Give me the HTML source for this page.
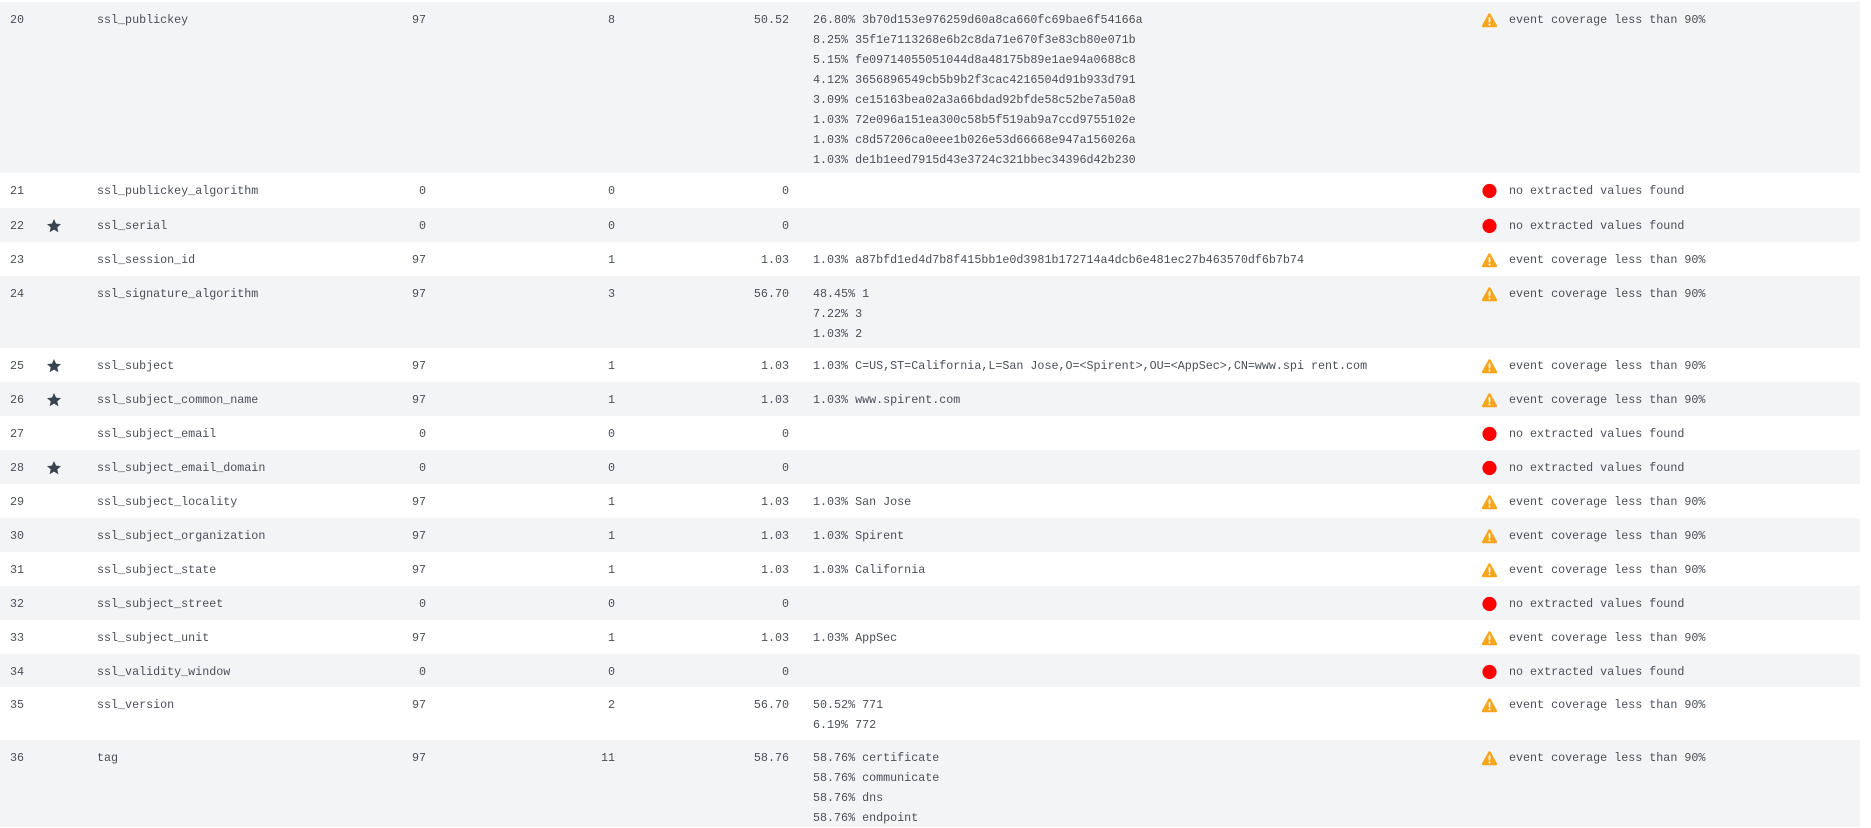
<!DOCTYPE html>
<html><head><meta charset="utf-8"><style>
body{margin:0;width:1871px;height:827px;background:#fff;overflow:hidden;font-family:"Liberation Mono",monospace;font-size:11.7px;color:#4a4f57;}
.r{position:absolute;left:0;width:1860px;}
.g{background:#f3f4f6;}
.c{position:absolute;top:8px;line-height:20px;white-space:pre;}
.n{left:10px}.nm{left:97px}.a{right:1434px;text-align:right}.b{right:1245px;text-align:right}.p{right:1071px;text-align:right}.v{left:813px}.st{left:1509px}
.star{position:absolute;left:46px;top:10px;width:16px;height:16px}
.ico{position:absolute;left:1481px;top:10px;width:17px;height:16px}
</style></head><body>
<svg width="0" height="0" style="position:absolute"><defs>
<symbol id="s" viewBox="0 0 24 24"><path d="M12 1.5l3.1 7 7.4.6-5.6 4.9 1.7 7.4L12 17.5l-6.6 3.9 1.7-7.4L1.5 9.1l7.4-.6z" fill="#3a4350"/></symbol>
<symbol id="w" viewBox="0 0 24 22"><path d="M12 1.5c.7 0 1.2.4 1.6 1l9 16.2c.6 1.2-.2 2.6-1.6 2.6H3c-1.4 0-2.2-1.4-1.6-2.6l9-16.2c.4-.6.9-1 1.6-1z" fill="#f9a51a"/><rect x="10.8" y="7" width="2.4" height="7.5" rx="1" fill="#fff"/><circle cx="12" cy="17.3" r="1.4" fill="#fff"/></symbol>
<symbol id="e" viewBox="0 0 24 22"><circle cx="12" cy="11" r="10" fill="#f00"/></symbol>
</defs></svg>

<div class="r g" style="top:2px;height:171px"><div class="c n">20</div><div class="c nm">ssl_publickey</div><div class="c a">97</div><div class="c b">8</div><div class="c p">50.52</div><div class="c v">26.80% 3b70d153e976259d60a8ca660fc69bae6f54166a
8.25% 35f1e7113268e6b2c8da71e670f3e83cb80e071b
5.15% fe09714055051044d8a48175b89e1ae94a0688c8
4.12% 3656896549cb5b9b2f3cac4216504d91b933d791
3.09% ce15163bea02a3a66bdad92bfde58c52be7a50a8
1.03% 72e096a151ea300c58b5f519ab9a7ccd9755102e
1.03% c8d57206ca0eee1b026e53d66668e947a156026a
1.03% de1b1eed7915d43e3724c321bbec34396d42b230</div><svg class="ico"><use href="#w"/></svg><div class="c st">event coverage less than 90%</div></div>

<div class="r" style="top:173px;height:35px"><div class="c n">21</div><div class="c nm">ssl_publickey_algorithm</div><div class="c a">0</div><div class="c b">0</div><div class="c p">0</div><svg class="ico"><use href="#e"/></svg><div class="c st">no extracted values found</div></div>

<div class="r g" style="top:208px;height:34px"><div class="c n">22</div><svg class="star"><use href="#s"/></svg><div class="c nm">ssl_serial</div><div class="c a">0</div><div class="c b">0</div><div class="c p">0</div><svg class="ico"><use href="#e"/></svg><div class="c st">no extracted values found</div></div>

<div class="r" style="top:242px;height:34px"><div class="c n">23</div><div class="c nm">ssl_session_id</div><div class="c a">97</div><div class="c b">1</div><div class="c p">1.03</div><div class="c v">1.03% a87bfd1ed4d7b8f415bb1e0d3981b172714a4dcb6e481ec27b463570df6b7b74</div><svg class="ico"><use href="#w"/></svg><div class="c st">event coverage less than 90%</div></div>

<div class="r g" style="top:276px;height:72px"><div class="c n">24</div><div class="c nm">ssl_signature_algorithm</div><div class="c a">97</div><div class="c b">3</div><div class="c p">56.70</div><div class="c v">48.45% 1
7.22% 3
1.03% 2</div><svg class="ico"><use href="#w"/></svg><div class="c st">event coverage less than 90%</div></div>

<div class="r" style="top:348px;height:34px"><div class="c n">25</div><svg class="star"><use href="#s"/></svg><div class="c nm">ssl_subject</div><div class="c a">97</div><div class="c b">1</div><div class="c p">1.03</div><div class="c v">1.03% C=US,ST=California,L=San Jose,O=&lt;Spirent&gt;,OU=&lt;AppSec&gt;,CN=www.spi rent.com</div><svg class="ico"><use href="#w"/></svg><div class="c st">event coverage less than 90%</div></div>

<div class="r g" style="top:382px;height:34px"><div class="c n">26</div><svg class="star"><use href="#s"/></svg><div class="c nm">ssl_subject_common_name</div><div class="c a">97</div><div class="c b">1</div><div class="c p">1.03</div><div class="c v">1.03% www.spirent.com</div><svg class="ico"><use href="#w"/></svg><div class="c st">event coverage less than 90%</div></div>

<div class="r" style="top:416px;height:34px"><div class="c n">27</div><div class="c nm">ssl_subject_email</div><div class="c a">0</div><div class="c b">0</div><div class="c p">0</div><svg class="ico"><use href="#e"/></svg><div class="c st">no extracted values found</div></div>

<div class="r g" style="top:450px;height:34px"><div class="c n">28</div><svg class="star"><use href="#s"/></svg><div class="c nm">ssl_subject_email_domain</div><div class="c a">0</div><div class="c b">0</div><div class="c p">0</div><svg class="ico"><use href="#e"/></svg><div class="c st">no extracted values found</div></div>

<div class="r" style="top:484px;height:34px"><div class="c n">29</div><div class="c nm">ssl_subject_locality</div><div class="c a">97</div><div class="c b">1</div><div class="c p">1.03</div><div class="c v">1.03% San Jose</div><svg class="ico"><use href="#w"/></svg><div class="c st">event coverage less than 90%</div></div>

<div class="r g" style="top:518px;height:34px"><div class="c n">30</div><div class="c nm">ssl_subject_organization</div><div class="c a">97</div><div class="c b">1</div><div class="c p">1.03</div><div class="c v">1.03% Spirent</div><svg class="ico"><use href="#w"/></svg><div class="c st">event coverage less than 90%</div></div>

<div class="r" style="top:552px;height:34px"><div class="c n">31</div><div class="c nm">ssl_subject_state</div><div class="c a">97</div><div class="c b">1</div><div class="c p">1.03</div><div class="c v">1.03% California</div><svg class="ico"><use href="#w"/></svg><div class="c st">event coverage less than 90%</div></div>

<div class="r g" style="top:586px;height:34px"><div class="c n">32</div><div class="c nm">ssl_subject_street</div><div class="c a">0</div><div class="c b">0</div><div class="c p">0</div><svg class="ico"><use href="#e"/></svg><div class="c st">no extracted values found</div></div>

<div class="r" style="top:620px;height:34px"><div class="c n">33</div><div class="c nm">ssl_subject_unit</div><div class="c a">97</div><div class="c b">1</div><div class="c p">1.03</div><div class="c v">1.03% AppSec</div><svg class="ico"><use href="#w"/></svg><div class="c st">event coverage less than 90%</div></div>

<div class="r g" style="top:654px;height:33px"><div class="c n">34</div><div class="c nm">ssl_validity_window</div><div class="c a">0</div><div class="c b">0</div><div class="c p">0</div><svg class="ico"><use href="#e"/></svg><div class="c st">no extracted values found</div></div>

<div class="r" style="top:687px;height:53px"><div class="c n">35</div><div class="c nm">ssl_version</div><div class="c a">97</div><div class="c b">2</div><div class="c p">56.70</div><div class="c v">50.52% 771
6.19% 772</div><svg class="ico"><use href="#w"/></svg><div class="c st">event coverage less than 90%</div></div>

<div class="r g" style="top:740px;height:87px"><div class="c n">36</div><div class="c nm">tag</div><div class="c a">97</div><div class="c b">11</div><div class="c p">58.76</div><div class="c v">58.76% certificate
58.76% communicate
58.76% dns
58.76% endpoint</div><svg class="ico"><use href="#w"/></svg><div class="c st">event coverage less than 90%</div></div>
</body></html>
